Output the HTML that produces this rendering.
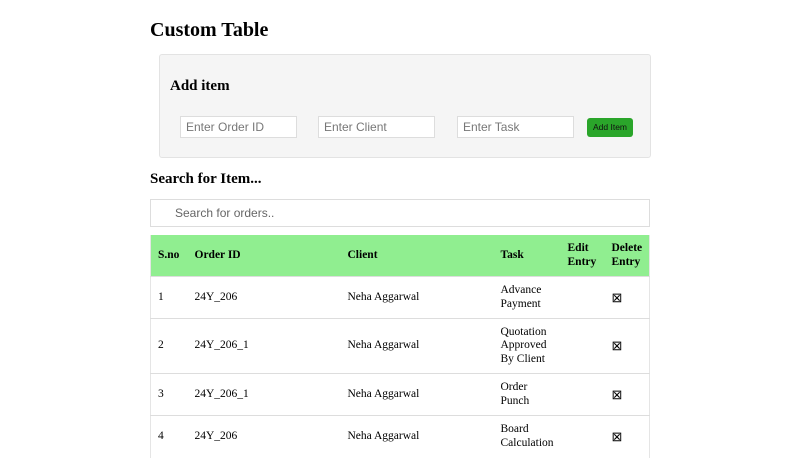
<!DOCTYPE html>
<html><head><style>
body{margin:0;width:800px;height:450px;overflow:hidden;background:#fff;font-family:"Liberation Serif",serif;color:#000;position:relative}
.a{position:absolute}
h1{position:absolute;left:150px;top:18px;margin:0;font-size:20px;line-height:24px}
.panel{left:159px;top:54px;width:490px;height:102px;background:#f5f5f5;border:1px solid #e3e3e3;border-radius:3px}
.h2{font-weight:bold;font-size:15px;line-height:18px}
.inp{position:absolute;top:116px;width:115px;height:20px;background:#fff;border:1px solid #ddd;font-family:"Liberation Sans",sans-serif;font-size:12px;color:#777;line-height:20px;text-indent:5px}
.btn{left:587px;top:118px;width:46px;height:19px;background:#2aa52a;border-radius:3px;font-family:"Liberation Sans",sans-serif;font-size:8.5px;line-height:19px;text-align:center;color:#111}
.search{left:150px;top:199px;width:498px;height:26px;border:1px solid #ddd;font-family:"Liberation Sans",sans-serif;font-size:12px;color:#666;line-height:26px;text-indent:24px}
table{position:absolute;left:150px;top:235px;width:500px;border-collapse:collapse;font-size:11.5px;line-height:13.3px;border-left:1px solid #e5e5e5;border-right:1px solid #e5e5e5}
th{background:#90ee90;text-align:left;height:41px;padding:0 0 0 7px;font-weight:bold}
td{padding:0 0 0 7px;border-top:1px solid #ddd}
.x{font-size:13px}
</style></head><body>
<h1>Custom Table</h1>
<div class="a panel"></div>
<div class="a h2" style="left:170px;top:77px">Add item</div>
<div class="inp" style="left:180px">Enter Order ID</div>
<div class="inp" style="left:318px">Enter Client</div>
<div class="inp" style="left:457px">Enter Task</div>
<div class="a btn">Add Item</div>
<div class="a h2" style="left:150px;top:170px">Search for Item...</div>
<div class="a search">Search for orders..</div>
<table>
<colgroup><col style="width:37px"><col style="width:153px"><col style="width:153px"><col style="width:67px"><col style="width:44px"><col></colgroup>
<tr><th>S.no</th><th>Order ID</th><th>Client</th><th>Task</th><th>Edit<br>Entry</th><th>Delete<br>Entry</th></tr>
<tr style="height:42px"><td>1</td><td>24Y_206</td><td>Neha Aggarwal</td><td>Advance<br>Payment</td><td></td><td class="x">&#8864;</td></tr>
<tr style="height:55px"><td>2</td><td>24Y_206_1</td><td>Neha Aggarwal</td><td>Quotation<br>Approved<br>By Client</td><td></td><td class="x">&#8864;</td></tr>
<tr style="height:42px"><td>3</td><td>24Y_206_1</td><td>Neha Aggarwal</td><td>Order<br>Punch</td><td></td><td class="x">&#8864;</td></tr>
<tr style="height:42px"><td>4</td><td>24Y_206</td><td>Neha Aggarwal</td><td>Board<br>Calculation</td><td></td><td class="x">&#8864;</td></tr>
</table>
</body></html>
